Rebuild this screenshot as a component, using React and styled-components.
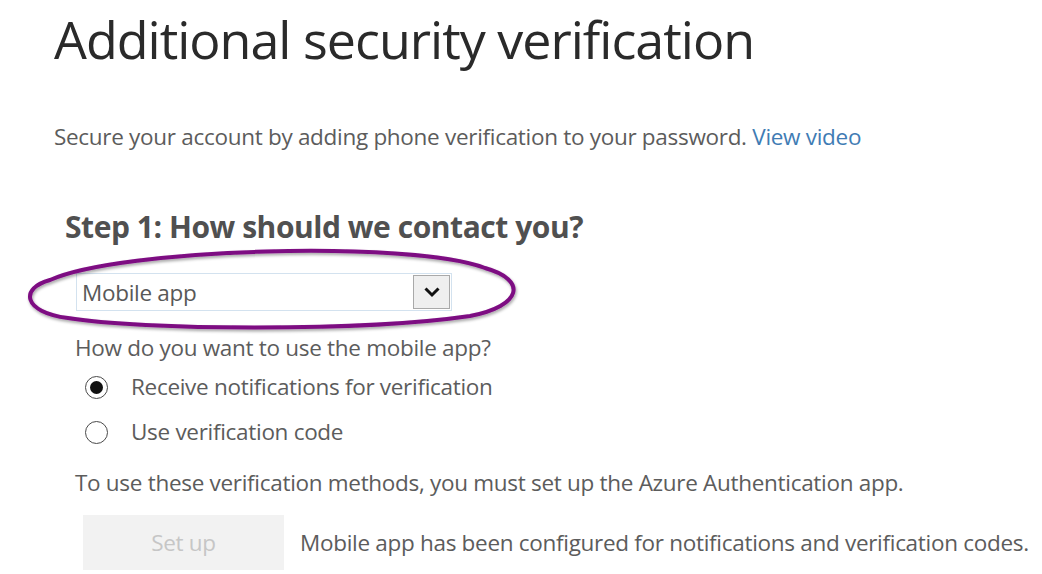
import React from 'react';
import styled, { createGlobalStyle } from 'styled-components';

const Global = createGlobalStyle`
  html, body {
    margin: 0;
    background: #ffffff;
  }
  body {
    font-family: "Open Sans", "Noto Sans", sans-serif;
    color: #5a5a5a;
  }
`;

const Page = styled.main`
  width: 1042px;
  height: 574px;
  overflow: hidden;
  box-sizing: border-box;
  padding: 4px 0 0 54px;
`;

const Title = styled.h1`
  margin: 0;
  font-size: 52px;
  line-height: 70px;
  letter-spacing: -1px;
  font-weight: 400;
  color: #2a2a2a;
`;

const Text = styled.p`
  margin: ${p => p.$top || 0}px 0 0;
  font-size: 22.5px;
  line-height: 30px;
  letter-spacing: -0.3px;
  color: #5c5c5c;
`;

const Link = styled.a`
  color: #3f7cb4;
  text-decoration: none;
`;

const StepTitle = styled.h2`
  margin: 57px 0 0 11px;
  font-size: 30px;
  line-height: 36px;
  letter-spacing: -0.45px;
  font-weight: 700;
  color: #505050;
`;

const Form = styled.section`
  margin-left: 21px;
`;

const SelectWrap = styled.div`
  position: relative;
  margin: 28px 0 0 1px;
  width: 376px;
`;

const Select = styled.div`
  display: flex;
  align-items: center;
  justify-content: space-between;
  box-sizing: border-box;
  height: 38px;
  padding: 0 1px 0 5px;
  border: 1px solid #d3e2ef;
  background: #fff;
  font-size: 22.5px;
  letter-spacing: -0.3px;
  color: #585858;
`;

const Caret = styled.span`
  display: flex;
  align-items: center;
  justify-content: center;
  width: 37px;
  height: 34px;
  box-sizing: border-box;
  border: 1px solid #a9a9a9;
  background: #efefef;
`;

const Ring = styled.svg`
  position: absolute;
  left: -46px;
  top: -17px;
  width: 484px;
  height: 72px;
  overflow: visible;
  pointer-events: none;
`;

const Options = styled.div`
  display: flex;
  flex-direction: column;
  gap: 15px;
  margin: 9px 0 0 10px;
`;

const Option = styled.label`
  display: flex;
  align-items: center;
  gap: 23px;
  font-size: 22.5px;
  line-height: 30px;
  letter-spacing: -0.3px;
  color: #5c5c5c;
`;

const Radio = styled.span`
  position: relative;
  width: 23px;
  height: 23px;
  box-sizing: border-box;
  border-radius: 50%;
  border: 1.5px solid #4a4a4a;
  background: #fff;
  flex: none;

  &::after {
    content: '';
    display: ${p => (p.$checked ? 'block' : 'none')};
    position: absolute;
    inset: 4px;
    border-radius: 50%;
    background: #111;
  }
`;

const Actions = styled.div`
  display: flex;
  align-items: center;
  gap: 16px;
  margin: 17px 0 0 8px;
`;

const SetupButton = styled.button`
  width: 201px;
  height: 55px;
  border: none;
  background: #f2f2f2;
  color: #c6c6c6;
  font-family: inherit;
  font-size: 22.5px;
  letter-spacing: -0.3px;
  cursor: default;
`;

const Status = styled.span`
  font-size: 22.5px;
  letter-spacing: -0.3px;
  color: #5c5c5c;
`;

export default function App() {
  return (
    <>
      <Global />
      <Page>
        <Title>Additional security verification</Title>
        <Text $top={48}>
          Secure your account by adding phone verification to your password. <Link href="#">View video</Link>
        </Text>
        <StepTitle>Step 1: How should we contact you?</StepTitle>
        <Form>
          <SelectWrap>
            <Select>
              Mobile app
              <Caret>
                <svg width="18" height="12" viewBox="0 0 18 12">
                  <path d="M2.5 2.5 L9 9 L15.5 2.5" fill="none" stroke="#111" strokeWidth="3" />
                </svg>
              </Caret>
            </Select>
            <Ring viewBox="0 0 484 72">
              <defs>
                <filter id="shade" x="-5%" y="-30%" width="110%" height="170%">
                  <feDropShadow dx="1" dy="2" stdDeviation="1.5" floodColor="#000" floodOpacity="0.35" />
                </filter>
              </defs>
              <path
                d="M20 24 C90 -8 380 -16 455 12 C498 24 492 50 440 60 C330 76 110 74 38 62 C-8 56 -10 32 20 24 Z"
                fill="none"
                stroke="#7d0a82"
                strokeWidth="4"
                filter="url(#shade)"
              />
            </Ring>
          </SelectWrap>
          <Text $top={22}>How do you want to use the mobile app?</Text>
          <Options>
            <Option>
              <Radio $checked />
              Receive notifications for verification
            </Option>
            <Option>
              <Radio />
              Use verification code
            </Option>
          </Options>
          <Text $top={21}>To use these verification methods, you must set up the Azure Authentication app.</Text>
          <Actions>
            <SetupButton disabled>Set up</SetupButton>
            <Status>Mobile app has been configured for notifications and verification codes.</Status>
          </Actions>
        </Form>
      </Page>
    </>
  );
}
